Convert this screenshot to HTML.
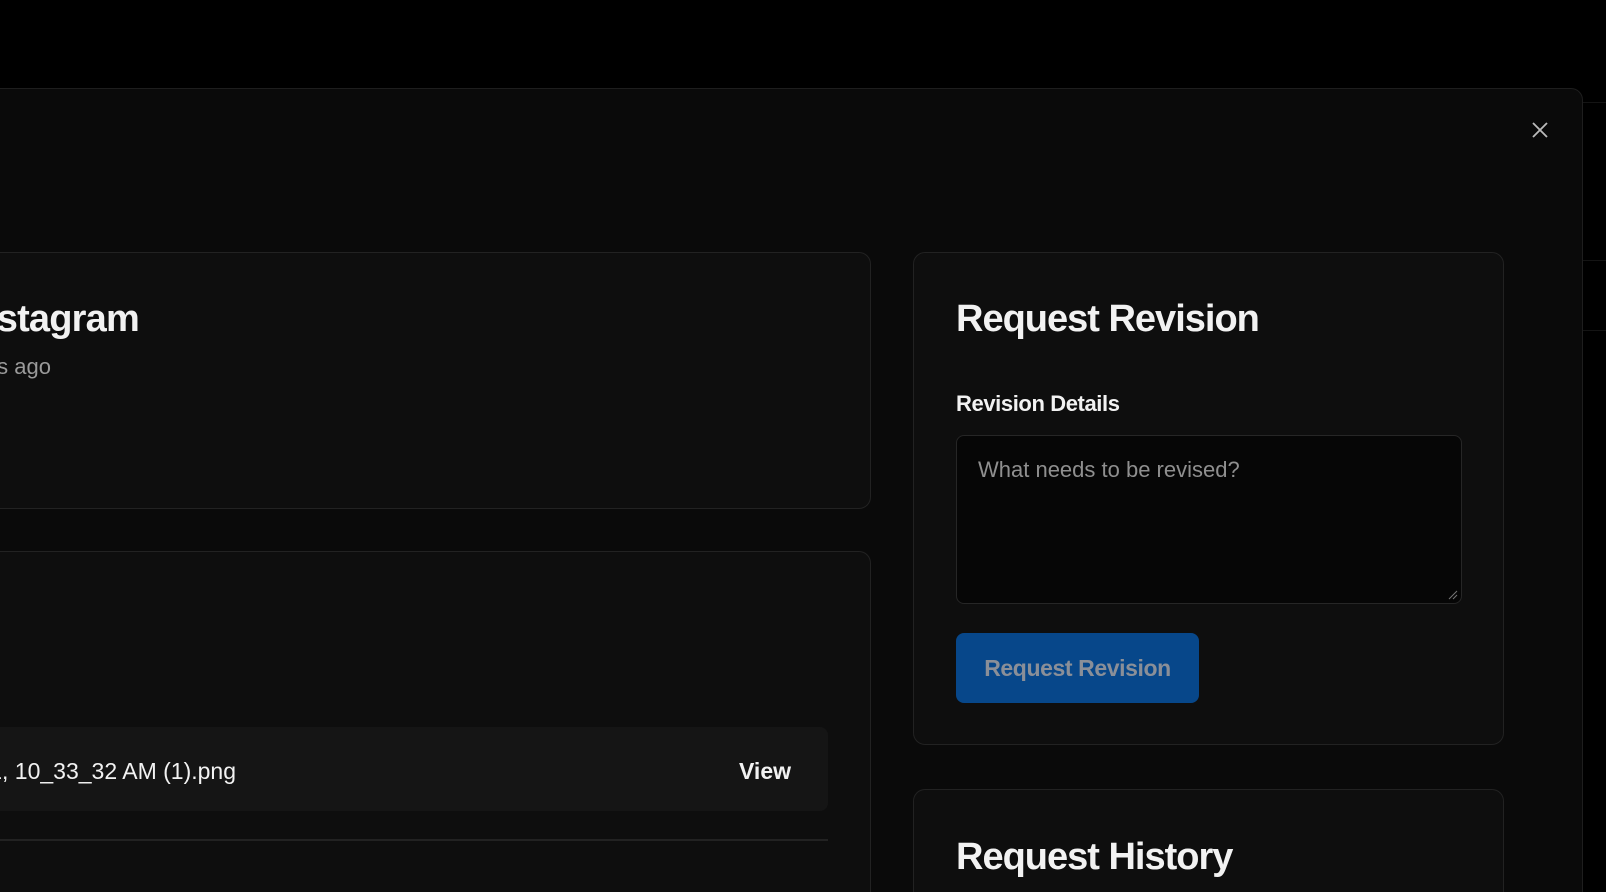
<!DOCTYPE html>
<html><head><style>
*{box-sizing:border-box;margin:0;padding:0}
html{width:1606px;height:892px;overflow:hidden}
body{width:1606px;height:892px;background:#000;position:relative;overflow:hidden;font-family:"Liberation Sans",sans-serif;color:#f2f2f2}
.abs{position:absolute}
.modal{left:-20px;top:88px;width:1603px;height:830px;background:#0a0a0a;border:1px solid #1e1e1e;border-radius:12px}
.card{background:#0e0e0e;border:1px solid #222;border-radius:12px}
.r{white-space:nowrap;text-align:right}
</style></head><body>
<div class="abs" style="left:1583px;top:102px;width:23px;height:1px;background:#141414"></div>
<div class="abs" style="left:1583px;top:260px;width:23px;height:1px;background:#141414"></div>
<div class="abs" style="left:1583px;top:330px;width:23px;height:1px;background:#141414"></div>
<div class="abs modal"></div>
<svg class="abs" style="left:1530px;top:120px" width="20" height="20" viewBox="0 0 20 20"><path d="M3 3L17 17M17 3L3 17" stroke="#bbb" stroke-width="1.8" fill="none"/></svg>

<div class="abs card" style="left:-20px;top:252px;width:891px;height:257px"></div>
<div class="abs r" style="right:1467px;top:298px;font-size:38px;font-weight:bold;letter-spacing:-0.8px">Instagram</div>
<div class="abs r" style="right:1555px;top:354px;font-size:22px;color:#9a9a9a">2 hours ago</div>

<div class="abs card" style="left:-20px;top:551px;width:891px;height:360px;border-bottom:none;border-radius:12px 12px 0 0"></div>
<div class="abs" style="left:-20px;top:727px;width:848px;height:84px;background:#151515;border-radius:8px"></div>
<div class="abs r" style="right:1370px;top:758px;font-size:23px">Screenshot 2024-01-01, 10_33_32 AM (1).png</div>
<div class="abs" style="left:739px;top:758px;font-size:23px;font-weight:bold">View</div>
<div class="abs" style="left:0;top:839px;width:828px;height:2px;background:#222"></div>

<div class="abs card" style="left:913px;top:252px;width:591px;height:493px"></div>
<div class="abs" style="left:956px;top:298px;font-size:38px;font-weight:bold;letter-spacing:-1px">Request Revision</div>
<div class="abs" style="left:956px;top:391px;font-size:22px;font-weight:bold;letter-spacing:-0.4px">Revision Details</div>
<div class="abs" style="left:956px;top:435px;width:506px;height:169px;background:#060606;border:1px solid #262626;border-radius:8px"></div>
<div class="abs" style="left:978px;top:457px;font-size:22px;color:#8f8f8f">What needs to be revised?</div>
<svg class="abs" style="left:1448px;top:590px" width="10" height="10"><path d="M1 9L9 1M5 9L9 5" stroke="#777" stroke-width="1"/></svg>
<div class="abs" style="left:956px;top:633px;width:243px;height:70px;background:#07478a;border-radius:8px;color:#8a8f98;font-size:23px;font-weight:bold;text-align:center;line-height:70px;letter-spacing:-0.4px">Request Revision</div>

<div class="abs card" style="left:913px;top:789px;width:591px;height:110px;border-bottom:none;border-radius:12px 12px 0 0"></div>
<div class="abs" style="left:956px;top:836px;font-size:38px;font-weight:bold;letter-spacing:-1px">Request History</div>
</body></html>
